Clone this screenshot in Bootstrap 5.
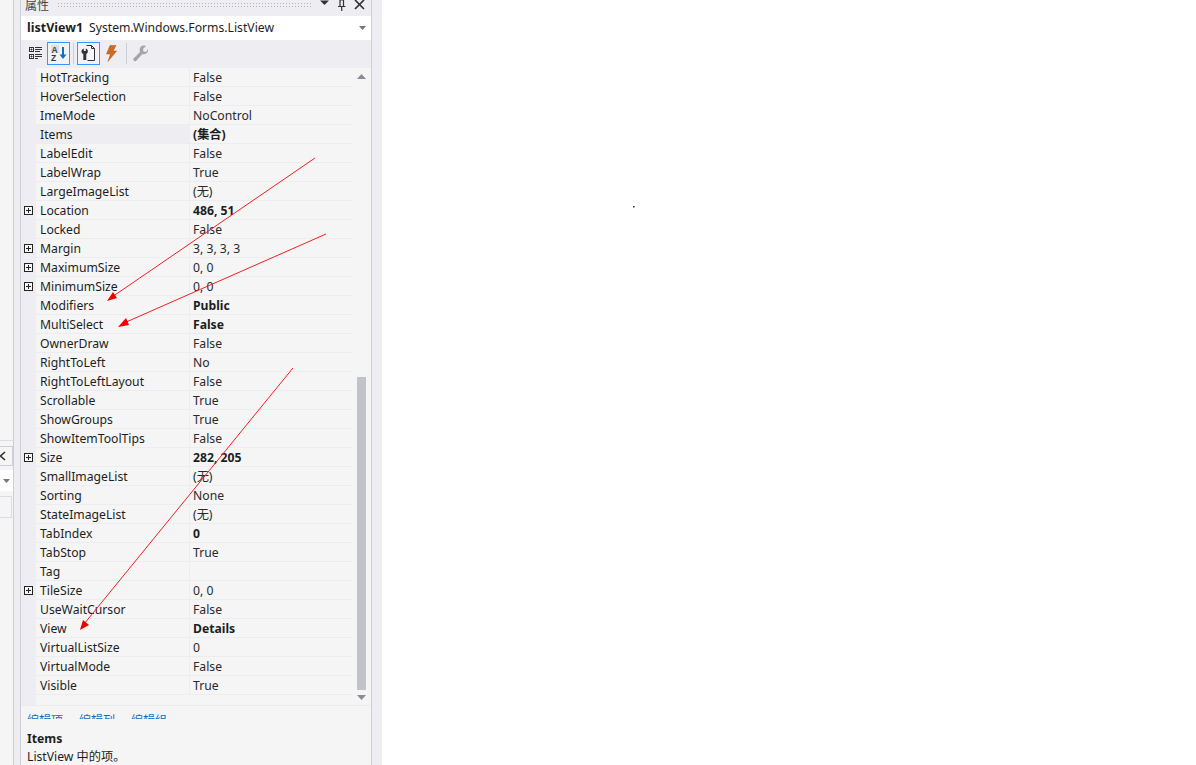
<!DOCTYPE html>
<html lang="zh">
<head>
<meta charset="utf-8">
<title>属性</title>
<link rel="stylesheet" href="https://cdn.jsdelivr.net/npm/bootstrap@5.3.0/dist/css/bootstrap.min.css">
<style>
html,body{height:765px;overflow:hidden;background:#fff}
body{font-family:"Noto Sans","Noto Sans CJK SC",sans-serif;font-size:12.2px;color:#1e1e1e;position:relative}
.shell{width:382px;height:765px;background:#eeeef2}
.strip{width:14px;background:#f5f5f5;border-right:1px solid #ccced8;flex:none;overflow:hidden}
.strip-top{height:441px;border-bottom:1px solid #dcdce2;width:13px}
.strip-btn{height:20px;width:13px;margin-top:5px;border:1px solid #ccced8;border-left:0;font-size:0;display:flex;align-items:center;justify-content:flex-start}
.strip-combo{height:21px;width:13px;background:#fff;margin-top:4px;display:flex;align-items:center;justify-content:center}
.strip-box{height:22px;width:12px;border:1px solid #dcdce2;border-left:0;margin-top:5px}
.gap-left{width:6px;flex:none}
.pane{width:352px;flex:none;border-left:1px solid #ccced8;border-right:1px solid #ccced8;background:#f5f5f5;display:flex;flex-direction:column;height:765px;overflow:hidden}
.title-row{height:16px;flex:none;background:#eeeef2;color:#444;line-height:11px;padding:0 6px 0 4px;overflow:hidden;font-size:12px}
.grip{height:6px;flex:1;margin:2px 8px 0 8px;background-image:radial-gradient(#b4b4bc 0.6px,transparent 0.8px);background-size:3px 3px;align-self:flex-start}
.combo-row{height:24px;flex:none;background:#fff;padding:0 5px 0 6px;white-space:nowrap}
.combo-row b{font-weight:700;margin-right:6px;font-size:12.5px}
.tool-row{height:28px;flex:none;background:#eeeef2;padding:0 0 2px 3px}
.tool-btn{width:23px;height:23px;display:flex;align-items:center;justify-content:center;border:1px solid transparent}
.tool-on{border-color:#3399ff;background:#f2f2f6}
.tool-sep{width:1px;height:21px;background:#ccced8;margin:0 3px}
.grid-wrap{height:638px;flex:none;background:#f5f5f5;border-bottom:1px solid #ececf0}
.gutter-col{width:15px;background:#eeeef2;flex:none}
.prop-list{width:316px;flex:none}
.prop-row{height:19px;line-height:18px;border-bottom:1px solid #ededf1}
.p-mark{width:15px;flex:none;margin-left:-15px;display:flex;align-items:center;justify-content:center}
.p-name{width:154px;flex:none;padding:1px 0 0 4px;border-right:1px solid #ededf1;white-space:nowrap;overflow:hidden}
.p-val{padding:1px 0 0 3px;white-space:nowrap;color:#2a2a2a}
.p-val.bold{font-weight:700;color:#1e1e1e}
.p-sel{background:#eeeef2}
.sbar{width:19px;flex:none;display:flex;flex-direction:column;align-items:center}
.sthumb{width:9px;height:313px;background:#c2c3c9;margin-top:298px}
.up-arr{margin-top:6px}
.dn-arr{margin-top:5px}
.cmd-area{height:13px;flex:none;padding-top:8px;padding-left:6px;overflow:hidden;box-sizing:border-box;line-height:14px;color:#0e70c0;gap:16px;white-space:nowrap;font-size:12px}
.desc-area{padding:9px 0 0 6px;white-space:nowrap}
.desc-line{height:19px;line-height:19px}
.desc-line.first{font-weight:700;padding-top:1px}
.ink{position:absolute;left:0;top:0;width:1196px;height:765px;pointer-events:none}
</style>
</head>
<body>
<div class="shell d-flex">
  <div class="strip">
    <div class="strip-top"></div>
    <div class="strip-btn"><svg width="6" height="10" viewBox="0 0 6 10"><path d="M5 1L.5 5 5 9" fill="none" stroke="#333" stroke-width="1.600"/></svg></div>
    <div class="strip-combo"><svg width="7" height="4" viewBox="0 0 7 4"><path d="M0 0h7L3.500 4z" fill="#777"/></svg></div>
    <div class="strip-box"></div>
  </div>
  <div class="gap-left"></div>
  <div class="pane">
    <div class="title-row d-flex">
      <span>属性</span>
      <div class="grip"></div>
      <svg class="me-2" width="9" height="5" viewBox="0 0 9 5"><path d="M0 .5h9L4.500 5z" fill="#333"/></svg>
      <svg class="me-2" width="9" height="11" viewBox="0 0 9 11"><path d="M3 0v6M6.500 0v6M1 6.500h7.500M4.700 6.500V11M3 0h3.500" fill="none" stroke="#333" stroke-width="1.200"/></svg>
      <svg width="11" height="10" viewBox="0 0 11 10"><path d="M1 0l9 9M10 0L1 9" stroke="#333" stroke-width="1.700" fill="none"/></svg>
    </div>
    <div class="combo-row d-flex align-items-center">
      <b>listView1</b><span>System.Windows.Forms.ListView</span>
      <svg class="ms-auto" width="7" height="4" viewBox="0 0 7 4"><path d="M0 0h7L3.500 4z" fill="#777"/></svg>
    </div>
    <div class="tool-row d-flex align-items-center">
      <div class="tool-btn"><svg width="16" height="16" viewBox="0 0 16 16"><g fill="#fff" stroke="#333"><rect x="1.500" y="2.500" width="4" height="4"/><rect x="1.500" y="9.500" width="4" height="4"/></g><path d="M2.500 4.500h2M3.500 3.500v2M2.500 11.500h2M3.500 10.500v2M7 2.500h7M7 4.500h7M7 6.500h5M7 9.500h7M7 11.500h7M7 13.500h3" stroke="#333" fill="none"/></svg></div>
      <div class="tool-btn tool-on"><svg width="19" height="17" viewBox="0 0 19 17"><rect x="2" y="0" width="8" height="8" fill="#ddd"/><text x="2.500" y="7.500" font-family="Liberation Sans" font-size="8.500" font-weight="700" fill="#444">A</text><text x="2" y="15.500" font-family="Liberation Sans" font-size="8.500" font-weight="700" fill="#333">Z</text><path d="M14 2v10" stroke="#0e70c0" stroke-width="2"/><path d="M10.500 9.500L14 14l3.500-4.500z" fill="#0e70c0"/></svg></div>
      <div class="tool-sep"></div>
      <div class="tool-btn tool-on"><svg width="19" height="18" viewBox="0 0 19 18"><path d="M7.500 1.500h5l3 3v12h-7" fill="#f5f5fa" stroke="#333"/><path d="M12.500 1.500v3h3" fill="none" stroke="#333"/><path d="M4.800 4.500v2.500h2V4.500c1.500.6 2.300 1.800 2 3.500-.3 1-.8 1.500-1.500 1.900V16H4.300V9.900C3 9.400 2.300 8.400 2.500 7c.2-1.200 1-2.100 2.300-2.500z" fill="#333"/></svg></div>
      <div class="tool-btn"><svg width="14" height="17" viewBox="0 0 14 17"><path d="M5 .5h6L8 6h3.500L3 16.500l2.500-7.500H1.500z" fill="#d4691e" stroke="#a8521c" stroke-width=".5"/></svg></div>
      <div class="tool-sep"></div>
      <div class="tool-btn"><svg width="19" height="19" viewBox="0 0 19 19"><path d="M11.500 1.500C13 1.500 14 2 14 2L11 5l.5 2.500L14 8l2-3c.5 3-1.500 6-5.500 5L4 17c-1.500 1-3.500-1-2.500-2.500L8 8c-1-3.500.5-6.500 3.500-6.500z" fill="#a5a5a9"/></svg></div>
    </div>
    <div class="grid-wrap d-flex">
      <div class="gutter-col"></div>
      <div class="prop-list" id="props"></div>
      <div class="sbar">
        <svg class="up-arr" width="9" height="5" viewBox="0 0 9 5"><path d="M4.500 0L9 5H0z" fill="#8a8b94"/></svg>
        <div class="sthumb"></div>
        <svg class="dn-arr" width="9" height="5" viewBox="0 0 9 5"><path d="M0 0h9L4.500 5z" fill="#8a8b94"/></svg>
      </div>
    </div>
    <div class="cmd-area d-flex"><span>编辑项</span><span>编辑列</span><span>编辑组</span></div>
    <div class="desc-area"><div class="desc-line first">Items</div><div class="desc-line">ListView 中的项。</div></div>
  </div>
</div>
<svg class="ink" viewBox="0 0 1196 765">
  <g stroke="#f02020" stroke-width="1" fill="none">
    <path d="M315 158L112 297"/><path d="M326 234L124 323"/><path d="M293 368L84 624"/>
  </g>
  <g fill="#f00000">
    <path d="M107 301l10-3-4-6z"/>
    <path d="M118 327l11-2-3-7z"/>
    <path d="M80 630l9-5-6-5z"/>
  </g>
  <rect x="633" y="206" width="1.500" height="1.500" fill="#333"/>
</svg>
<script>
const rows=[["HotTracking","False"],["HoverSelection","False"],["ImeMode","NoControl"],["Items","(集合)",1,0,1],["LabelEdit","False"],["LabelWrap","True"],["LargeImageList","(无)"],["Location","486, 51",1,1],["Locked","False"],["Margin","3, 3, 3, 3",0,1],["MaximumSize","0, 0",0,1],["MinimumSize","0, 0",0,1],["Modifiers","Public",1],["MultiSelect","False",1],["OwnerDraw","False"],["RightToLeft","No"],["RightToLeftLayout","False"],["Scrollable","True"],["ShowGroups","True"],["ShowItemToolTips","False"],["Size","282, 205",1,1],["SmallImageList","(无)"],["Sorting","None"],["StateImageList","(无)"],["TabIndex","0",1],["TabStop","True"],["Tag",""],["TileSize","0, 0",0,1],["UseWaitCursor","False"],["View","Details",1],["VirtualListSize","0"],["VirtualMode","False"],["Visible","True"]];
const plus='<svg width="9" height="9" viewBox="0 0 9 9"><rect x=".5" y=".5" width="8" height="8" fill="#f5f5f5" stroke="#222"/><path d="M2 4.500h5M4.500 2v5" stroke="#222"/></svg>';
document.getElementById('props').innerHTML=rows.map(r=>`<div class="prop-row d-flex"><div class="p-mark">${r[3]?plus:''}</div><div class="p-name${r[4]?' p-sel':''}">${r[0]}</div><div class="p-val${r[2]?' bold':''}">${r[1]}</div></div>`).join('');
</script>
<script src="https://cdn.jsdelivr.net/npm/bootstrap@5.3.0/dist/js/bootstrap.bundle.min.js"></script>
</body>
</html>
